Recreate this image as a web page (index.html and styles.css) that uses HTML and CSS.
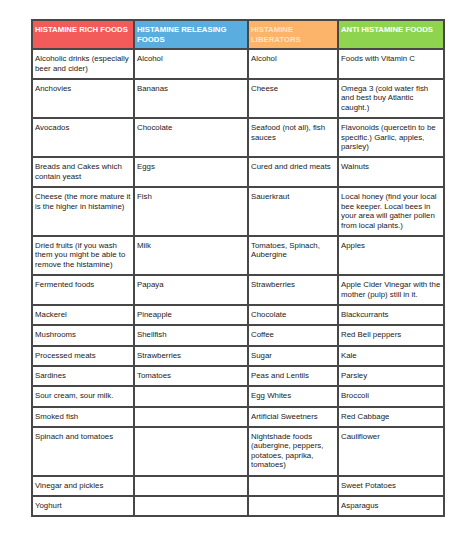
FILE: index.html
```html
<!DOCTYPE html>
<html>
<head>
<meta charset="utf-8">
<link rel="stylesheet" href="styles.css">
</head>
<body>
<div class="page">
<table class="foods">
<colgroup>
<col class="c1"><col class="c2"><col class="c3"><col class="c4">
</colgroup>
<thead>
<tr>
<th class="red">HISTAMINE RICH FOODS</th>
<th class="blue">HISTAMINE RELEASING FOODS</th>
<th class="orange">HISTAMINE LIBERATORS</th>
<th class="green">ANTI HISTAMINE FOODS</th>
</tr>
</thead>
<tbody>
<tr><td>Alcoholic drinks (especially beer and cider)</td><td>Alcohol</td><td>Alcohol</td><td>Foods with Vitamin C</td></tr>
<tr><td>Anchovies</td><td>Bananas</td><td>Cheese</td><td>Omega 3 (cold water fish and best buy Atlantic caught.)</td></tr>
<tr><td>Avocados</td><td>Chocolate</td><td>Seafood (not all), fish sauces</td><td>Flavonoids (quercetin to be specific.) Garlic, apples, parsley)</td></tr>
<tr><td>Breads and Cakes which contain yeast</td><td>Eggs</td><td>Cured and dried meats</td><td>Walnuts</td></tr>
<tr><td>Cheese (the more mature it is the higher in histamine)</td><td>Fish</td><td>Sauerkraut</td><td>Local honey (find your local bee keeper. Local bees in your area will gather pollen from local plants.)</td></tr>
<tr><td>Dried fruits (if you wash them you might be able to remove the histamine)</td><td>Milk</td><td>Tomatoes, Spinach, Aubergine</td><td>Apples</td></tr>
<tr><td>Fermented foods</td><td>Papaya</td><td>Strawberries</td><td>Apple Cider Vinegar with the mother (pulp) still in it.</td></tr>
<tr><td>Mackerel</td><td>Pineapple</td><td>Chocolate</td><td>Blackcurrants</td></tr>
<tr><td>Mushrooms</td><td>Shellfish</td><td>Coffee</td><td>Red Bell peppers</td></tr>
<tr><td>Processed meats</td><td>Strawberries</td><td>Sugar</td><td>Kale</td></tr>
<tr><td>Sardines</td><td>Tomatoes</td><td>Peas and Lentils</td><td>Parsley</td></tr>
<tr><td>Sour cream, sour milk.</td><td></td><td>Egg Whites</td><td>Broccoli</td></tr>
<tr><td>Smoked fish</td><td></td><td>Artificial Sweetners</td><td>Red Cabbage</td></tr>
<tr><td>Spinach and tomatoes</td><td></td><td>Nightshade foods (aubergine, peppers, potatoes, paprika, tomatoes)</td><td>Cauliflower</td></tr>
<tr><td>Vinegar and pickles</td><td></td><td></td><td>Sweet Potatoes</td></tr>
<tr><td>Yoghurt</td><td></td><td></td><td>Asparagus</td></tr>
</tbody>
</table>
</div>
</body>
</html>
```
FILE: styles.css
```css
html, body {
  margin: 0;
  padding: 0;
  background: #ffffff;
}
.page {
  padding: 19px 0 0 31px;
}
.foods {
  border-collapse: collapse;
  table-layout: fixed;
  width: 414px;
  font-family: "Liberation Sans", Arial, sans-serif;
  color: #222222;
}
.c1 { width: 102px; }
.c2 { width: 114px; }
.c3 { width: 90px; }
.c4 { width: 106px; }
.foods th,
.foods td {
  border: 2px solid #474747;
  vertical-align: top;
  text-align: left;
  padding: 4px 2px 4.8px 2px;
  line-height: 9.5px;
}
.foods td {
  font-size: 7.85px;
  font-weight: normal;
}
.foods th {
  font-size: 7.75px;
  font-weight: bold;
  color: #ffffff;
  padding: 4px 2px 4px 2px;
}
.red { background: #f35b5b; }
.blue { background: #5aaedf; }
.orange { background: #fbb46a; color: #fde3c6 !important; }
.green { background: #8ed44f; }
```
